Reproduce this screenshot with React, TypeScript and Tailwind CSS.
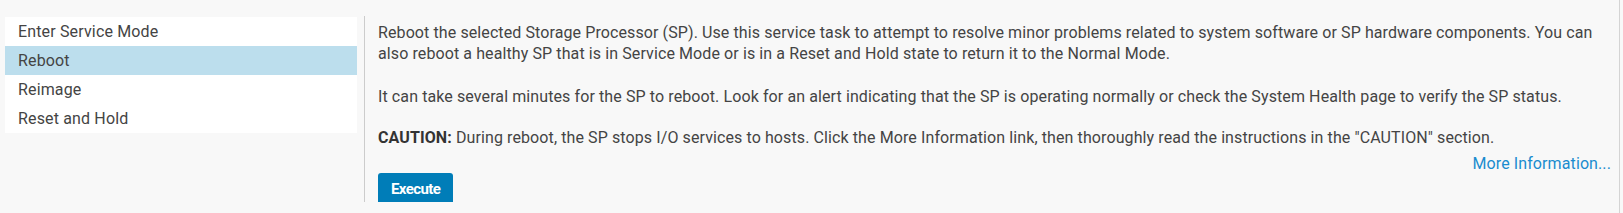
import React from "react";

const items = ["Enter Service Mode", "Reboot", "Reimage", "Reset and Hold"];

export default function App() {
  return (
    <div
      className="w-[1623px] h-[213px] bg-[#f8f8f8] text-[#444444] overflow-hidden"
      style={{ fontFamily: "Roboto, 'Noto Sans', sans-serif" }}
    >
      <div className="w-[1620px] h-[213px] border-r border-[#d4d4d4] flex">
        <div className="pl-[5px] pt-[17px] w-[357px] shrink-0">
          <ul className="bg-white">
            {items.map((it) => (
              <li
                key={it}
                className={`h-[29px] flex items-center pl-[13px] text-[16px] tracking-[0.15px] ${
                  it === "Reboot" ? "bg-[#bcdeed]" : ""
                }`}
              >
                {it}
              </li>
            ))}
          </ul>
        </div>
        <div className="ml-[7px] mt-[16px] h-[186px] border-l border-[#cccccc] flex-1 pl-[13px] pr-[8px] overflow-hidden text-[16px] leading-[21px] tracking-[0.1px]">
          <p className="pt-[6px]">
            Reboot the selected Storage Processor (SP). Use this service task to attempt to resolve minor problems related to system software or SP hardware components. You can also reboot a healthy SP that is in Service Mode or is in a Reset and Hold state to return it to the Normal Mode.
          </p>
          <p className="mt-[22px]">
            It can take several minutes for the SP to reboot. Look for an alert indicating that the SP is operating normally or check the System Health page to verify the SP status.
          </p>
          <p className="mt-[20px]">
            <span className="font-bold text-[#333333]">CAUTION:</span> During reboot, the SP stops I/O services to hosts. Click the More Information link, then thoroughly read the instructions in the "CAUTION" section.
          </p>
          <div className="flex justify-end mt-[5px]">
            <a className="text-[#1a8ccf] cursor-pointer">More Information...</a>
          </div>
          <button className="-mt-[1px] h-[32px] px-[13px] rounded-t-[3px] bg-[#007db8] text-white font-bold text-[15px] tracking-[-0.6px]">
            Execute
          </button>
        </div>
      </div>
    </div>
  );
}
